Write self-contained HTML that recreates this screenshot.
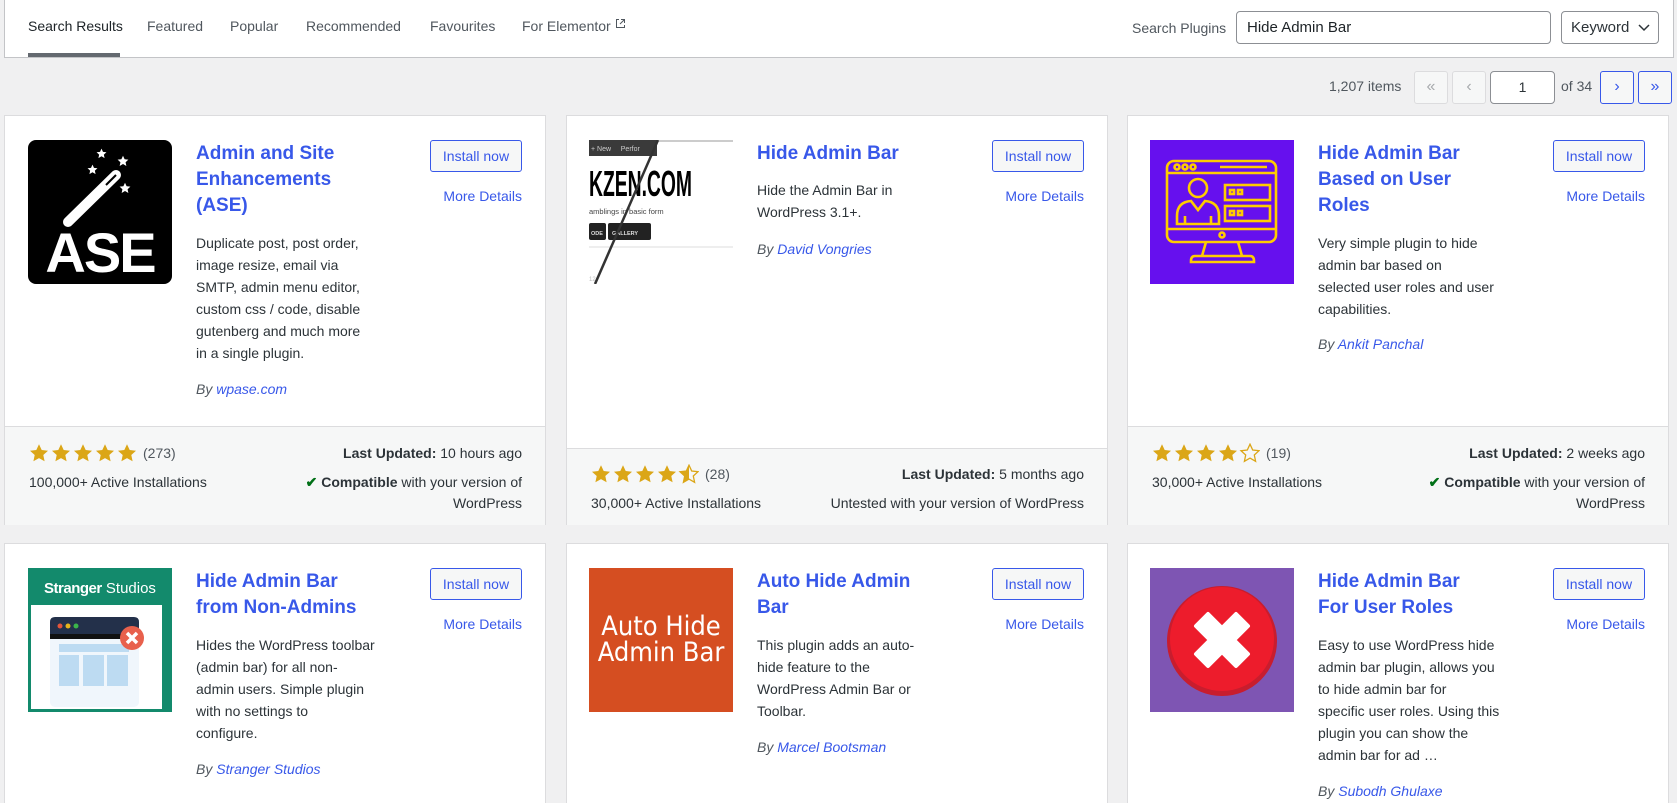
<!DOCTYPE html>
<html><head><meta charset="utf-8">
<style>
*{box-sizing:border-box;margin:0;padding:0}
html,body{width:1677px;height:803px;overflow:hidden}
body{background:#f0f0f1;font-family:"Liberation Sans",sans-serif;color:#2c3338;font-size:14px}
#wrap{position:relative;width:1677px;height:803px;overflow:hidden;background:#f0f0f1}
.abs{position:absolute}
.hdr{position:absolute;left:4px;top:-1px;width:1670px;height:59px;background:#fff;border:1px solid #c3c4c7;border-top:none}
.tab{position:absolute;top:18px;font-size:14px;color:#50575e;line-height:18px;white-space:nowrap}
.card{position:absolute;background:#fff;border:1px solid #dcdcde;width:542px}
.icon{position:absolute;left:22px;top:24px;width:144px;height:144px;overflow:hidden}
.title{position:absolute;left:190px;top:25px;font-size:19px;font-weight:bold;color:#3858e9;line-height:26px;white-space:nowrap}
.desc{position:absolute;left:190px;font-size:14px;line-height:22px;color:#2c3338;white-space:nowrap}
.auth{position:absolute;left:190px;font-size:14px;line-height:22px;font-style:italic;color:#50575e;white-space:nowrap}
.auth span{color:#3858e9}
.btn{position:absolute;right:23px;top:24px;width:92px;height:32px;border:1px solid #3858e9;border-radius:3px;background:#f6f7f7;color:#3858e9;font-size:14px;line-height:30px;text-align:center}
.more{position:absolute;right:23px;top:69px;font-size:14px;line-height:22px;color:#3858e9}
.foot{position:absolute;left:0;right:0;background:#f6f7f7;border-top:1px solid #dcdcde}
.stars{position:absolute;left:24px;height:22px;display:flex;align-items:center;font-size:14px;color:#50575e}
.stars svg{margin-right:2px}
.fl{position:absolute;left:24px;line-height:20px;font-size:14px;white-space:nowrap}
.fr{position:absolute;right:23px;line-height:20px;font-size:14px;text-align:right;white-space:nowrap}
.pg{position:absolute;top:71px;height:33px;width:34px;border:1px solid #dcdcde;background:#f6f7f7;color:#a7aaad;border-radius:3px;text-align:center;line-height:30px;font-size:16px}
.pga{border-color:#3858e9;color:#3858e9}
</style></head><body>
<div id="wrap">
<svg width="0" height="0" style="position:absolute"><defs>
<path id="st" d="M10 1.2l2.7 5.8 6.3.7-4.7 4.3 1.3 6.3L10 15.1l-5.6 3.2 1.3-6.3L1 7.7l6.3-.7z"/>
</defs></svg>

<div class="hdr">
<div class="tab" style="left:23px;color:#1d2327">Search Results</div>
<div class="abs" style="left:23px;top:54px;width:92px;height:4px;background:#646970"></div>
<div class="tab" style="left:142px">Featured</div>
<div class="tab" style="left:225px">Popular</div>
<div class="tab" style="left:301px">Recommended</div>
<div class="tab" style="left:425px">Favourites</div>
<div class="tab" style="left:517px">For Elementor <svg width="11" height="11" viewBox="0 0 11 11" style="vertical-align:2px"><path d="M4 1.5H1.5v8h8V7M6 1.5h3.5V5M9.5 1.5L5 6" fill="none" stroke="#50575e" stroke-width="1"/></svg></div>
<div class="tab" style="left:1127px;top:20px">Search Plugins</div>
<div class="abs" style="left:1231px;top:12px;width:315px;height:33px;border:1px solid #8c8f94;border-radius:4px;font-size:15px;line-height:31px;padding-left:10px;color:#1d2327">Hide Admin Bar</div>
<div class="abs" style="left:1556px;top:12px;width:98px;height:33px;border:1px solid #8c8f94;border-radius:4px;font-size:15px;line-height:31px;padding-left:9px;color:#2c3338">Keyword<svg width="12" height="8" viewBox="0 0 12 8" style="position:absolute;right:8px;top:12px"><path d="M1 1l5 5 5-5" fill="none" stroke="#2c3338" stroke-width="1.5"/></svg></div>
</div>

<div class="abs" style="left:1329px;top:78px;font-size:14px;color:#50575e">1,207 items</div>
<div class="pg" style="left:1414px">«</div>
<div class="pg" style="left:1452px">‹</div>
<div class="abs" style="left:1490px;top:71px;width:65px;height:33px;border:1px solid #8c8f94;border-radius:4px;background:#fff;text-align:center;line-height:31px;font-size:14px">1</div>
<div class="abs" style="left:1561px;top:78px;font-size:14px;color:#50575e">of 34</div>
<div class="pg pga" style="left:1600px">›</div>
<div class="pg pga" style="left:1638px">»</div>

<!-- Card 1 -->
<div class="card" style="left:4px;top:115px;height:410px">
<div class="icon" style="left:23px;background:#000;border-radius:8px">
<svg width="144" height="144" viewBox="0 0 144 144">
<line x1="40" y1="82" x2="88" y2="35" stroke="#fff" stroke-width="10" stroke-linecap="round"/>
<line x1="78" y1="45" x2="88" y2="35" stroke="#000" stroke-width="2"/>
<g fill="#fff"><use href="#st" transform="translate(68,8) scale(.55)"/><use href="#st" transform="translate(89,15) scale(.6)"/><use href="#st" transform="translate(59,24) scale(.55)"/><use href="#st" transform="translate(91,42) scale(.6)"/></g>
<text x="72" y="132" text-anchor="middle" fill="#fff" font-family="Liberation Sans" font-weight="bold" font-size="56" letter-spacing="-2">ASE</text>
</svg></div>
<div class="title" style="left:191px">Admin and Site<br>Enhancements<br>(ASE)</div>
<div class="desc" style="left:191px;top:116px">Duplicate post, post order,<br>image resize, email via<br>SMTP, admin menu editor,<br>custom css / code, disable<br>gutenberg and much more<br>in a single plugin.</div>
<div class="auth" style="left:191px;top:262px">By <span>wpase.com</span></div>
<div class="btn">Install now</div>
<div class="more">More Details</div>
<div class="foot" style="top:310px;height:99px">
<div class="stars" style="top:15px"><svg width="108" height="20" viewBox="0 0 108 20" fill="#dba617"><use href="#st"/><use href="#st" x="22"/><use href="#st" x="44"/><use href="#st" x="66"/><use href="#st" x="88"/></svg><span style="margin-left:4px">(273)</span></div>
<div class="fl" style="top:45px">100,000+ Active Installations</div>
<div class="fr" style="top:16px"><b>Last Updated:</b> 10 hours ago</div>
<div class="fr" style="top:45px;line-height:21px"><span style="color:#007017;font-weight:bold">✔</span> <b>Compatible</b> with your version of<br>WordPress</div>
</div>
</div>

<!-- Card 2 -->
<div class="card" style="left:566px;top:115px;height:410px">
<div class="icon" style="background:#fff">
<svg width="144" height="144" viewBox="0 0 144 144">
<rect x="0" y="0" width="68" height="16" fill="#3a3a3a"/>
<line x1="68" y1="1" x2="144" y2="1" stroke="#999"/>
<text x="2" y="11" fill="#ccc" font-size="7" font-family="Liberation Sans">+ New &#160;&#160;&#160;&#160;Perfor</text>
<text x="0" y="56" fill="#000" font-size="36" font-weight="bold" font-family="Liberation Sans Narrow, Liberation Sans" textLength="103" lengthAdjust="spacingAndGlyphs">KZEN.COM</text>
<text x="0" y="74" fill="#444" font-size="7.5" font-family="Liberation Sans">amblings in basic form</text>
<rect x="0" y="83" width="17" height="17" rx="2" fill="#222"/><rect x="19" y="83" width="43" height="17" rx="2" fill="#222"/>
<text x="2" y="95" fill="#ddd" font-size="5.5" font-weight="bold">ODE</text><text x="23" y="95" fill="#ddd" font-size="5.5" font-weight="bold">GALLERY</text>
<line x1="0" y1="107" x2="144" y2="107" stroke="#ddd"/>
<text x="0" y="141" fill="#bbb" font-size="6">12</text>
<line x1="69" y1="0" x2="6" y2="144" stroke="#333" stroke-width="2.5"/>
</svg></div>
<div class="title">Hide Admin Bar</div>
<div class="desc" style="top:63px">Hide the Admin Bar in<br>WordPress 3.1+.</div>
<div class="auth" style="top:122px">By <span>David Vongries</span></div>
<div class="btn">Install now</div>
<div class="more">More Details</div>
<div class="foot" style="top:332px;height:77px">
<div class="stars" style="top:14px"><svg width="108" height="20" viewBox="0 0 108 20" fill="#dba617"><use href="#st"/><use href="#st" x="22"/><use href="#st" x="44"/><use href="#st" x="66"/><path d="M98 1.2l2.7 5.8 6.3.7-4.7 4.3 1.3 6.3L98 15.1l-5.6 3.2 1.3-6.3L89 7.7l6.3-.7z" fill="none" stroke="#dba617" stroke-width="1.3"/><path d="M98 1.2V15.1l-5.6 3.2 1.3-6.3L89 7.7l6.3-.7z"/></svg><span style="margin-left:4px">(28)</span></div>
<div class="fl" style="top:44px">30,000+ Active Installations</div>
<div class="fr" style="top:15px"><b>Last Updated:</b> 5 months ago</div>
<div class="fr" style="top:44px">Untested with your version of WordPress</div>
</div>
</div>

<!-- Card 3 -->
<div class="card" style="left:1127px;top:115px;height:410px">
<div class="icon" style="background:#6610ee">
<svg width="144" height="144" viewBox="0 0 144 144" fill="none" stroke="#ffcc00" stroke-width="2.6">
<rect x="17" y="21" width="109" height="81" rx="7"/>
<line x1="17" y1="33" x2="126" y2="33"/>
<circle cx="27" cy="27" r="2.5"/><circle cx="35" cy="27" r="2.5"/><circle cx="43" cy="27" r="2.5"/>
<line x1="70" y1="27" x2="117" y2="27"/>
<line x1="17" y1="89" x2="126" y2="89"/>
<circle cx="72" cy="95" r="2.5"/>
<path d="M56 102l-4 14M88 102l4 14M45 116h55q4 0 4 5v1H41v-1q0-5 4-5z"/>
<circle cx="48" cy="48" r="9"/>
<path d="M27 84v-8q0-14 14-15l7 9 7-9q14 1 14 15v8zM35 84v-8M61 84v-8"/>
<rect x="75" y="45" width="45" height="15"/><rect x="75" y="66" width="45" height="15"/>
<rect x="80" y="50" width="4" height="4"/><rect x="88" y="50" width="4" height="4"/><rect x="80" y="71" width="4" height="4"/><rect x="88" y="71" width="4" height="4"/>
</svg></div>
<div class="title">Hide Admin Bar<br>Based on User<br>Roles</div>
<div class="desc" style="top:116px">Very simple plugin to hide<br>admin bar based on<br>selected user roles and user<br>capabilities.</div>
<div class="auth" style="top:217px">By <span>Ankit Panchal</span></div>
<div class="btn">Install now</div>
<div class="more">More Details</div>
<div class="foot" style="top:310px;height:99px">
<div class="stars" style="top:15px"><svg width="108" height="20" viewBox="0 0 108 20" fill="#dba617"><use href="#st"/><use href="#st" x="22"/><use href="#st" x="44"/><use href="#st" x="66"/><path d="M98 1.2l2.7 5.8 6.3.7-4.7 4.3 1.3 6.3L98 15.1l-5.6 3.2 1.3-6.3L89 7.7l6.3-.7z" fill="none" stroke="#dba617" stroke-width="1.3"/></svg><span style="margin-left:4px">(19)</span></div>
<div class="fl" style="top:45px">30,000+ Active Installations</div>
<div class="fr" style="top:16px"><b>Last Updated:</b> 2 weeks ago</div>
<div class="fr" style="top:45px;line-height:21px"><span style="color:#007017;font-weight:bold">✔</span> <b>Compatible</b> with your version of<br>WordPress</div>
</div>
</div>

<!-- Card 4 -->
<div class="card" style="left:4px;top:543px;height:262px;border-bottom:none">
<div class="icon" style="left:23px;background:#138a6c">
<div class="abs" style="left:0;right:0;top:12px;text-align:center;color:#fff;font-size:15px;line-height:18px"><b style="letter-spacing:-0.5px">Stranger</b> Studios</div>
<div class="abs" style="left:3px;top:37px;width:131px;height:104px;background:#fff">
<svg width="131" height="104" viewBox="0 0 131 104">
<rect x="19" y="12" width="89" height="90" rx="5" fill="#f0f6fc"/>
<path d="M19 17q0-5 5-5h79q5 0 5 5v17H19z" fill="#23304a"/>
<rect x="19" y="29" width="89" height="5" fill="#111"/>
<circle cx="29" cy="21" r="2.5" fill="#e2543a"/><circle cx="37" cy="21" r="2.5" fill="#e6b41c"/><circle cx="45" cy="21" r="2.5" fill="#3bb54a"/>
<rect x="28" y="39" width="70" height="8" fill="#bddbf2"/>
<rect x="28" y="50" width="20" height="31" fill="#bddbf2"/><rect x="52" y="50" width="21" height="31" fill="#bddbf2"/><rect x="76" y="50" width="21" height="31" fill="#bddbf2"/>
<circle cx="101" cy="33" r="12" fill="#e8604c"/>
<path d="M96 28l10 10M106 28l-10 10" stroke="#fff" stroke-width="3.5"/>
</svg></div>
</div>
<div class="title" style="left:191px">Hide Admin Bar<br>from Non-Admins</div>
<div class="desc" style="left:191px;top:90px">Hides the WordPress toolbar<br>(admin bar) for all non-<br>admin users. Simple plugin<br>with no settings to<br>configure.</div>
<div class="auth" style="left:191px;top:214px">By <span>Stranger Studios</span></div>
<div class="btn">Install now</div>
<div class="more">More Details</div>
</div>

<!-- Card 5 -->
<div class="card" style="left:566px;top:543px;height:262px;border-bottom:none">
<div class="icon" style="background:#d54e21">
<div class="abs" style="left:0;right:0;top:46px;text-align:center;color:#fff;font-size:27px;line-height:26px;font-family:'DejaVu Sans Condensed','DejaVu Sans',sans-serif">Auto Hide<br>Admin Bar</div>
</div>
<div class="title">Auto Hide Admin<br>Bar</div>
<div class="desc" style="top:90px">This plugin adds an auto-<br>hide feature to the<br>WordPress Admin Bar or<br>Toolbar.</div>
<div class="auth" style="top:192px">By <span>Marcel Bootsman</span></div>
<div class="btn">Install now</div>
<div class="more">More Details</div>
</div>

<!-- Card 6 -->
<div class="card" style="left:1127px;top:543px;height:262px;border-bottom:none">
<div class="icon" style="background:#7e55b3">
<svg width="144" height="144" viewBox="0 0 144 144">
<circle cx="72" cy="73" r="55" fill="#c81d2e"/>
<circle cx="72" cy="71" r="52" fill="#ed1c2c"/>
<path d="M46 58l12-12 14 14 14-14 12 12-14 14 14 14-12 12-14-14-14 14-12-12 14-14z" fill="#fff" stroke="#fff" stroke-width="4" stroke-linejoin="round"/>
</svg></div>
<div class="title">Hide Admin Bar<br>For User Roles</div>
<div class="desc" style="top:90px">Easy to use WordPress hide<br>admin bar plugin, allows you<br>to hide admin bar for<br>specific user roles. Using this<br>plugin you can show the<br>admin bar for ad …</div>
<div class="auth" style="top:236px">By <span>Subodh Ghulaxe</span></div>
<div class="btn">Install now</div>
<div class="more">More Details</div>
</div>
</div>
</body></html>
